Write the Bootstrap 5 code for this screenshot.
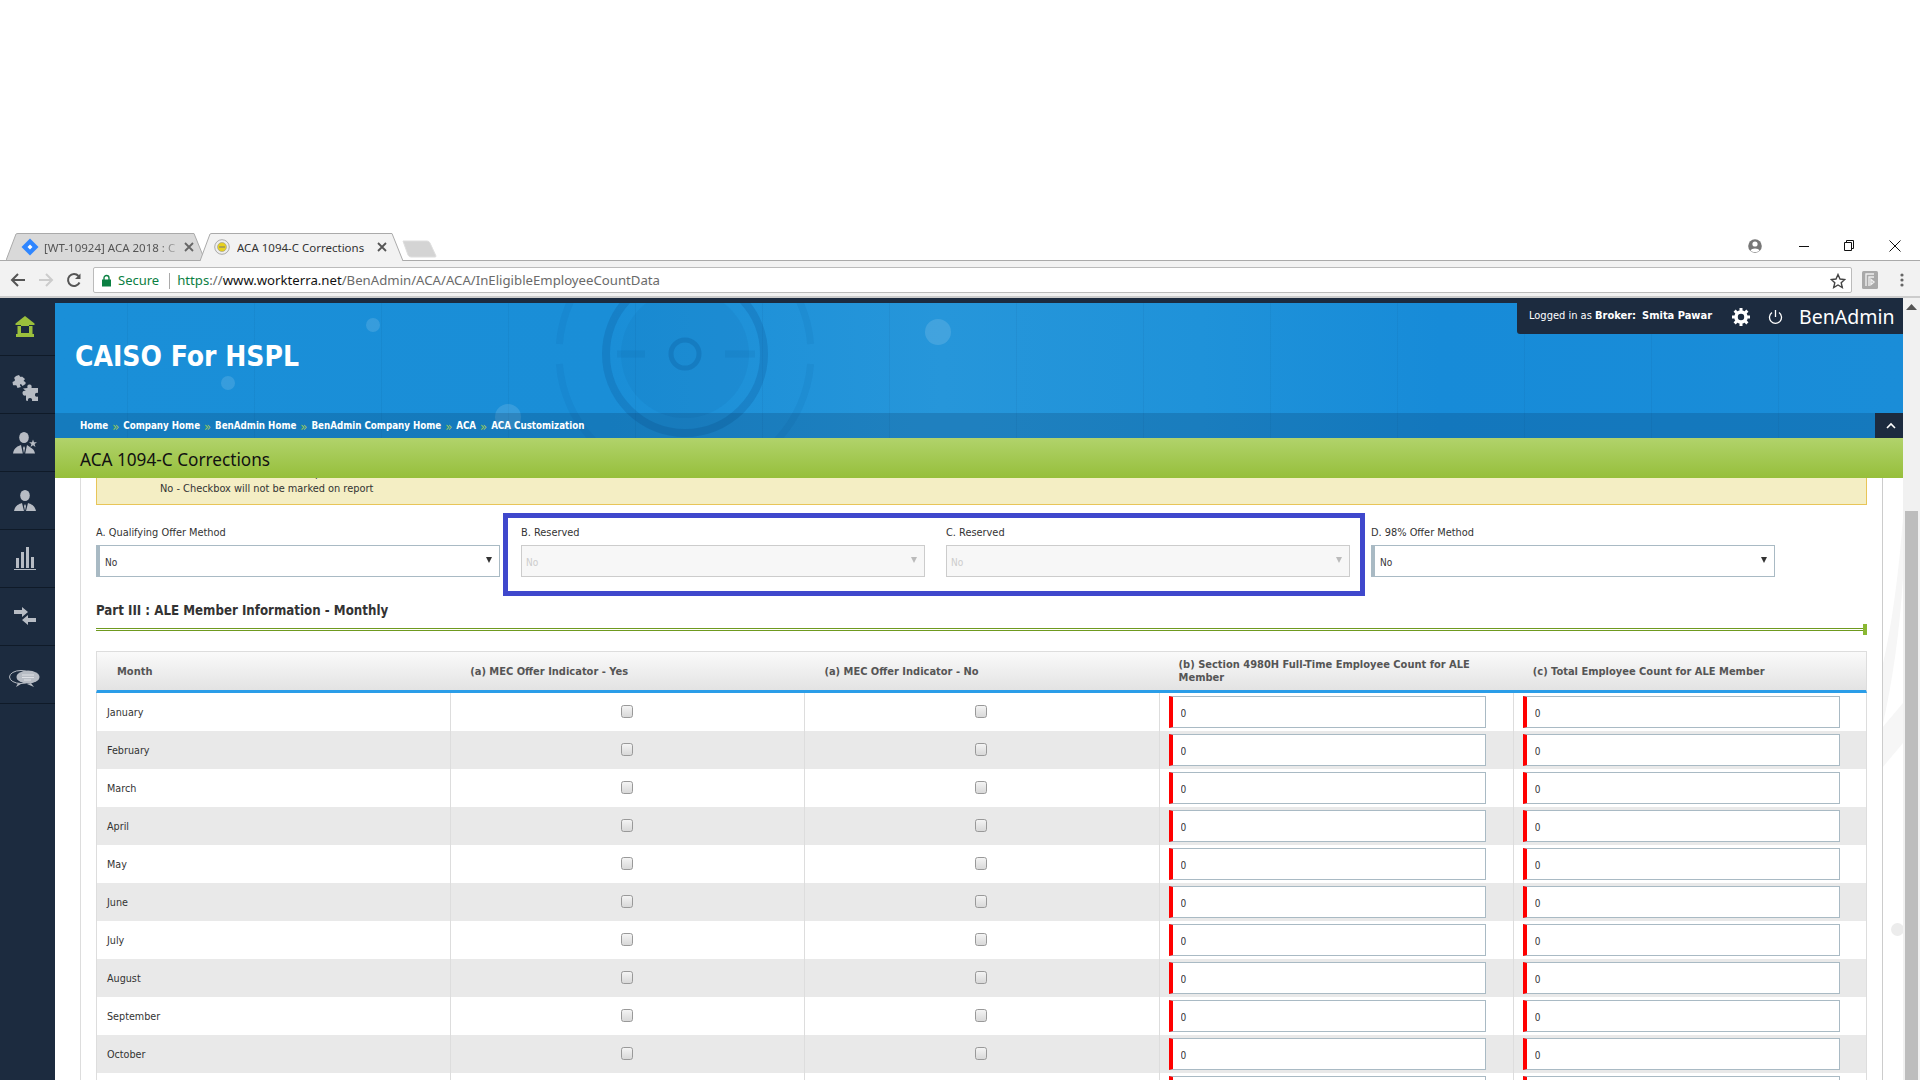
<!DOCTYPE html>
<html lang="en">
<head>
<meta charset="utf-8">
<title>ACA 1094-C Corrections</title>
<link href="https://cdn.jsdelivr.net/npm/bootstrap@5.3.0/dist/css/bootstrap.min.css" rel="stylesheet">
<style>
html,body{height:1080px;overflow:hidden;background:#fff;margin:0}
body{font-family:"DejaVu Sans Condensed","DejaVu Sans",sans-serif;font-size:10.9px;color:#333}
.blank-top{height:233px}
.tab-strip{height:28px;border-bottom:1px solid #aaa;position:relative;font-family:"Noto Sans",sans-serif;font-size:11.5px}
.chrome-tab{position:relative;height:28px;flex:none;color:#333}
.chrome-tab>svg.shape{position:absolute;left:0;top:0}
.chrome-tab>*:not(.shape){position:relative}
.tab-one{width:200px;margin-left:6px;color:#555}
.tab-one .tab-label{-webkit-mask-image:linear-gradient(90deg,#000 84%,transparent 100%);mask-image:linear-gradient(90deg,#000 84%,transparent 100%)}
.tab-two{width:204px;margin-left:-6px}
.tab-label{white-space:nowrap;overflow:hidden;flex:1;padding-top:1px}
.new-tab{margin-left:-2px;margin-top:7px}
.win-btns{margin-left:auto;padding-right:19px;height:26px}
.tool-bar{height:37px;padding:3px 0 0 4px;background:#f2f2f2;border-bottom:2px solid #ccc;font-family:"Noto Sans",sans-serif}
.nav-ico{width:28px;flex:none}
.addr-box{width:1759px;height:26px;margin-left:5px;background:#fff;border:1px solid #bbb;border-radius:2px;font-size:13.2px;white-space:nowrap;padding:1px 0 0 7px}
.sec-txt{color:#0b8043;font-size:13px;margin-left:6px}
.addr-sep{width:1px;height:16px;background:#aaa;margin:0 7px 0 10px}
.u-green{color:#0b8043}.u-grey{color:#6a6a6a}.u-black{color:#111}
.app-wrap{height:782px}
.side-rail{width:55px;flex:none;background:#1c2b3f}
.rail-item{height:58px;border-bottom:1px solid #0f1a28;padding-right:5px}
.nudge-down{margin-top:6px}
.nudge-up{margin-top:-2px}
.app-main{width:1848px;flex:none;background:#1c2b3f;padding-top:5px;overflow:hidden;position:relative}
.hero-wrap{position:relative;height:135px;overflow:hidden;background-color:#1b8ed7;background-image:repeating-linear-gradient(90deg,transparent 0,transparent 126px,rgba(0,40,90,.06) 126px,rgba(0,40,90,.06) 127px),linear-gradient(90deg,#1a8fd8 0,#1a8ed7 30%,#2696da 48%,#1f92d9 62%,#178bd8 75%,#1a8dd8 100%);background-position:-54px 0,0 0}
.hero-art{position:absolute;left:0;top:-5px}
.hero{height:110px;position:relative}
.hero-title{position:relative;margin:0;padding:36px 0 0 20px;font-size:28px;line-height:36px;font-weight:700;color:#fff;font-family:"DejaVu Sans Condensed",sans-serif}
.login-box{position:absolute;right:0;top:0;width:386px;height:36px;background:#1c2b3f;color:#fff;border-bottom-left-radius:3px;padding:1px 0 0 12px;font-size:11px;z-index:2}
.login-box b{font-weight:700}
.ben-name{font-family:"Noto Sans",sans-serif;font-size:19.500px;margin-left:16px}
.crumb-bar{height:25px;background:rgba(0,20,50,.16);position:relative;overflow:hidden;font-size:9.700px;font-weight:700;color:#fff;padding:2px 0 0 25px}
.crumb-sep{color:#9cc85a;font-weight:400;width:15px;text-align:center;flex:none;font-size:13px;line-height:12px}
.crumb-up{position:absolute;right:0;top:0;width:28px;height:25px;background:#1c2b3f;padding-left:3px}
.title-bar{height:40px;background:linear-gradient(180deg,#b1d36b 0,#96bf3b 100%);padding:4px 0 0 25px;font-family:"Noto Sans",sans-serif;font-size:17.200px;color:#111}
.content-outer{height:602px;overflow:hidden;background:#fff;position:relative}
.pane-swoosh{position:absolute;left:1827px;top:0}
.pane-circle{position:absolute;left:1836px;top:445px;width:13px;height:13px;border-radius:50%;background:#ececec}
.content-pane{height:602px;overflow:hidden;background:#fff;position:relative;margin-left:25px;width:1803px;border-left:1px solid #ddd;border-right:1px solid #ccc}
.pane-inner{width:1771px;margin-left:15px}
.note-box{margin-top:-13px;height:40px;background:#f4eec4;border:1px solid #e8c558;padding:0 0 0 9px;line-height:15px;color:#333}
.note-box span{display:block}
.note-box .note-no{padding-left:54px}
.field-row{position:relative;margin-top:8px;padding-top:13px;height:83px}
.field-col{width:425px;flex:none;padding-right:21px}
.field-lbl{display:block;line-height:13px;margin-bottom:6px;height:13px;color:#333}
.blue-mark{position:absolute;left:407px;top:0;width:862px;height:83px;border:5px solid #3f48cc}
select.plain-sel{height:32px;border-radius:0;font-size:10px;color:#333;padding:3px 20px 0 5px;border:1px solid #a9bac4;border-left-width:4px;background-size:6px 6px;background-position:right 7px top 11px;background-image:url("data:image/svg+xml,%3csvg xmlns='http://www.w3.org/2000/svg' viewBox='0 0 6 6'%3e%3cpath fill='%23333' d='M0 0h6L3 6z'/%3e%3c/svg%3e")}
select.plain-sel:disabled{background-color:#f7f7f7;border:1px solid #ccc;color:#ccc;padding-left:4px;background-image:url("data:image/svg+xml,%3csvg xmlns='http://www.w3.org/2000/svg' viewBox='0 0 6 6'%3e%3cpath fill='%23bbb' d='M0 0h6L3 6z'/%3e%3c/svg%3e")}
.part-head{margin:0;font-size:13.200px;font-weight:700;color:#333;line-height:16px;padding-top:7px}
.dbl-line{position:relative;height:3px;margin-top:9px;border-top:1px solid #6f9a1f;border-bottom:1px solid #6f9a1f}
.dbl-line i{position:absolute;right:0;top:-5px;width:4px;height:11px;background:#8ab833}
.data-table{margin:20px 0 0;table-layout:fixed;width:1771px;font-size:10.7px;border-collapse:separate;border-spacing:0}
.data-table thead th{height:42px;padding:0 10px 0 20px;font-size:11px;line-height:13px;font-weight:700;color:#555;vertical-align:middle;background:linear-gradient(180deg,#fafafa 0,#e3e3e3 100%);border:0;border-top:1px solid #ddd;border-bottom:3px solid #2a9de8;box-shadow:none}
.data-table thead th:first-child{border-left:1px solid #ddd}
.data-table thead th:last-child{border-right:1px solid #ddd}
.data-table tbody td{height:38px;padding:0 0 0 9px;vertical-align:middle;background:#fff;border:0;border-left:1px solid #ddd;color:#333;box-shadow:none}
.data-table tbody td:last-child{border-right:1px solid #ddd}
.data-table tbody td:first-child{padding:2px 0 0 10px}
.data-table tbody tr:nth-child(even) td{background:#e9e9e9}
.data-table td.chk-cell{text-align:center;padding:0 2px 0 0}
input.box-chk{margin:0;width:12px;height:13px;border-radius:2px;border:1px solid #999;background:linear-gradient(180deg,#f4f4f4,#d8d8d8);vertical-align:middle;float:none}
input.num-fld{width:317px;height:32px;border-radius:0;border:1px solid #a9bac4;border-left:4px solid #f00;font-size:10px;padding:3px 0 0 8px;color:#333;background:#fff;line-height:14px;min-height:0}
.scroll-rail{width:17px;flex:none;background:#f1f1f1;padding-left:2px}
.scroll-up{height:22px;padding-top:6px;padding-left:1px}
.scroll-gap{height:191px}
.scroll-thumb{width:13px;height:569px;background:#bdbdbd}
</style>
</head>
<body>
<div class="blank-top"></div>

<div class="tab-strip d-flex">
  <div class="chrome-tab tab-one d-flex align-items-center">
    <svg class="shape" width="200" height="28" viewBox="0 0 200 28"><path d="M0 27.500 10 1Q10.500 .5 12 .5H188L199 27.500Z" fill="#d9d9d9" stroke="#aaa"/></svg>
    <svg width="18" height="18" viewBox="0 0 18 18" class="flex-none" style="margin-left:15px;margin-right:5px"><path d="M9 .5 17.500 9 9 17.500.5 9z" fill="#2f86ff"/><path d="M9 6.500 11.500 9 9 11.500 6.500 9z" fill="#fff"/></svg>
    <span class="tab-label">[WT-10924] ACA 2018 : C</span>
    <svg width="12" height="12" viewBox="0 0 12 12" style="margin-left:1px;margin-right:11px"><path d="M2 2 10 10M10 2 2 10" stroke="#666" stroke-width="1.800"/></svg>
  </div>
  <div class="chrome-tab tab-two d-flex align-items-center">
    <svg class="shape" width="204" height="29" viewBox="0 0 204 29"><path d="M0 28 10 1Q10.500 .5 12 .5H192L203 28" fill="#f2f2f2" stroke="#aaa"/></svg>
    <svg width="16" height="16" viewBox="0 0 16 16" class="flex-none" style="margin-left:14px;margin-right:7px"><circle cx="8" cy="8" r="7.300" fill="#eee" stroke="#aaa"/><circle cx="8" cy="8" r="4.500" fill="#e8d21d" stroke="#999" stroke-width=".6"/><path d="M5 8h6" stroke="#777"/></svg>
    <span class="tab-label">ACA 1094-C Corrections</span>
    <svg width="12" height="12" viewBox="0 0 12 12" style="margin-right:16px"><path d="M2 2 10 10M10 2 2 10" stroke="#555" stroke-width="1.800"/></svg>
  </div>
  <svg class="new-tab" width="36" height="18" viewBox="0 0 36 18"><path d="M1 1H25Q27 1 28 3L34 16Q34 17 33 17H9Q7 17 6 15Z" fill="#d4d4d4" stroke="#dedede"/></svg>
  <div class="win-btns d-flex align-items-center">
    <svg width="16" height="16" viewBox="0 0 16 16" style="margin-right:35px"><circle cx="8" cy="8" r="6.800" fill="#777"/><circle cx="8" cy="6" r="2.600" fill="#fff"/><path d="M3.500 12.500C4.500 9.800 11.500 9.800 12.500 12.500 10.500 14.500 5.500 14.500 3.500 12.500Z" fill="#fff"/></svg>
    <svg width="12" height="12" viewBox="0 0 12 12" style="margin-right:33px"><path d="M1 6.500H11" stroke="#111"/></svg>
    <svg width="12" height="12" viewBox="0 0 12 12" style="margin-right:34px"><path d="M3.500 2.500V.5H10.500V8.500H8.500M1.500 2.500H8.500V10.500H1.500Z" fill="none" stroke="#111"/></svg>
    <svg width="12" height="12" viewBox="0 0 12 12"><path d="M.5 .5 11.500 11.500M11.500 .5 .5 11.500" stroke="#111"/></svg>
  </div>
</div>

<div class="tool-bar d-flex align-items-center">
  <div class="nav-ico d-flex justify-content-center"><svg width="16" height="16" viewBox="0 0 16 16"><path d="M15 8H2M8 2 2 8 8 14" fill="none" stroke="#555" stroke-width="2"/></svg></div>
  <div class="nav-ico d-flex justify-content-center"><svg width="16" height="16" viewBox="0 0 16 16"><path d="M1 8H14M8 2 14 8 8 14" fill="none" stroke="#ccc" stroke-width="2"/></svg></div>
  <div class="nav-ico d-flex justify-content-center"><svg width="16" height="16" viewBox="0 0 16 16"><path d="M13.500 10.500A6 6 0 1 1 12.500 4" fill="none" stroke="#555" stroke-width="2"/><path d="M14.500 1.500V7H9Z" fill="#555"/></svg></div>
  <div class="addr-box d-flex align-items-center">
    <svg width="11" height="13" viewBox="0 0 11 13" class="flex-none"><path d="M3 6V4A2.500 2.500 0 0 1 8 4V6" fill="none" stroke="#0b8043" stroke-width="1.400"/><rect x="1" y="5.500" width="9" height="7" fill="#0b8043"/></svg>
    <span class="sec-txt">Secure</span><span class="addr-sep"></span>
    <span><span class="u-green">https</span><span class="u-grey">://</span><span class="u-black">www.workterra.net</span><span class="u-grey">/BenAdmin/ACA/ACA/InEligibleEmployeeCountData</span></span>
    <svg width="16" height="16" viewBox="0 0 16 16" class="ms-auto" style="margin-right:5px"><path d="M8 1.500 10 6 14.800 6.500 11.200 9.700 12.300 14.500 8 12 3.700 14.500 4.800 9.700 1.200 6.500 6 6Z" fill="none" stroke="#444" stroke-width="1.400"/></svg>
  </div>
  <svg width="16" height="18" viewBox="0 0 16 18" style="margin-left:10px"><rect width="16" height="18" rx="1.500" fill="#a9a9a9"/><path d="M4 15V3H12M7 15V6H12M9 8.500 12 11 9 13.500Z" fill="none" stroke="#eee" stroke-width="1.400"/></svg>
  <svg width="4" height="14" viewBox="0 0 4 14" style="margin-left:22px"><circle cx="2" cy="2" r="1.600" fill="#666"/><circle cx="2" cy="7" r="1.600" fill="#666"/><circle cx="2" cy="12" r="1.600" fill="#666"/></svg>
</div>

<div class="app-wrap d-flex">
  <nav class="side-rail">
    <div class="rail-item d-flex align-items-center justify-content-center"><svg width="20" height="21" viewBox="0 0 20 21"><path d="M10 0 19.500 7.500V9H.5V7.500Z" fill="#9bc03c"/><path d="M2.500 10H6V17H14V10H17.500V18H19V21H1V18H2.500Z" fill="#9bc03c"/><path d="M6 9H14V10H6Z" fill="#9bc03c"/></svg></div>
    <div class="rail-item d-flex align-items-center justify-content-center"><svg class="nudge-down" width="27" height="26" viewBox="0 0 27 26"><g fill="#b7bcc4"><path d="M4 1 7 0C8 2 9 2.500 10 1.500L13 4 11.500 6C13 7 14 6.500 13.500 9L10.500 11 9 9C7.500 9 8 11 9 12L5.500 13 4.500 10.500C3 9.500 2 11 1 10L.5 7 2.500 6C3.500 5 2.500 3.500 2 3Z"/><path d="M11 13.500 15.500 13C15 11 15.500 9.500 17.500 9.500S20 11 19.500 13L26 13V18C24 17.500 23 18.500 23 20S24 22 26 21.500V26H20C20.500 24 19.500 23 18 23S15.500 24 16 26L14 25.500V20.500C12 21 10.500 20 10.500 18S12 15.500 14 16Z"/></g></svg></div>
    <div class="rail-item d-flex align-items-center justify-content-center"><svg width="25" height="22" viewBox="0 0 25 22"><g fill="#b7bcc4"><ellipse cx="11" cy="5.500" rx="4.800" ry="5.500"/><path d="M0 21.500C1 15.500 5 14 8 13L9.800 21.500ZM22 21.500C21.500 19 21 18 19 16.500L14 13 12.200 21.500ZM11 14 12 16 11 21.500 10 16Z"/><path d="M20 7.500 21 10.300H24L21.600 12 22.500 15 20 13.200 17.500 15 18.400 12 16 10.300H19Z"/></g></svg></div>
    <div class="rail-item d-flex align-items-center justify-content-center"><svg width="22" height="21" viewBox="0 0 22 21"><g fill="#b7bcc4"><ellipse cx="11" cy="5.500" rx="4.800" ry="5.500"/><path d="M0 21C1 15.500 5 14 8 13L10 21ZM22 21C21 15.500 17 14 14 13L12 21ZM11 14 12 16 11 21 10 16Z"/></g></svg></div>
    <div class="rail-item d-flex align-items-center justify-content-center"><svg width="23" height="23" viewBox="0 0 23 23"><g fill="#b7bcc4"><rect x="2" y="11" width="3" height="10"/><rect x="7" y="5" width="3" height="16"/><rect x="12" y="0" width="3" height="21"/><rect x="17" y="10" width="3" height="11"/><rect x="0" y="22" width="22" height="1"/></g></svg></div>
    <div class="rail-item d-flex align-items-center justify-content-center"><svg class="nudge-up" width="23" height="18" viewBox="0 0 23 18"><g fill="#b7bcc4"><path d="M0 3H8V0L14 5 8 10V7H0Z"/><path d="M22 11H14V8L8 13 14 18V15H22Z"/></g></svg></div>
    <div class="rail-item d-flex align-items-center justify-content-center"><svg class="nudge-down" width="32" height="20" viewBox="0 0 32 20"><ellipse cx="12" cy="9" rx="11.500" ry="6.500" fill="none" stroke="#b7bcc4"/><path d="M9 15 7 19 12 16ZM22 15 25 19 18 16Z" fill="#b7bcc4"/><ellipse cx="19" cy="9" rx="11.500" ry="6.500" fill="#b7bcc4"/><path d="M13 7H25M13 9.500H25M15 12H22" stroke="#e8eaed" stroke-width=".8"/></svg></div>
  </nav>

  <div class="app-main">
    <div class="login-box d-flex align-items-center">
      <span>Logged in as&nbsp;<b>Broker:</b></span><b style="margin-left:6px">Smita Pawar</b>
      <svg width="18" height="18" viewBox="0 0 18 18" style="margin-left:20px"><circle cx="9" cy="9" r="5" fill="none" stroke="#fff" stroke-width="3.600"/><path d="M9 0V4M9 14V18M0 9H4M14 9H18M2.600 2.600 5.500 5.500M12.500 12.500 15.400 15.400M15.400 2.600 12.500 5.500M5.500 12.500 2.600 15.400" stroke="#fff" stroke-width="3"/></svg>
      <svg width="15" height="16" viewBox="0 0 15 16" style="margin-left:18px"><path d="M4 3.500A6 6 0 1 0 11 3.500M7.500 1V8" fill="none" stroke="#fff" stroke-width="1.300"/></svg>
      <span class="ben-name">BenAdmin</span>
    </div>
    <div class="hero-wrap">
      <svg class="hero-art" width="1848" height="140" viewBox="0 0 1848 140">
        <circle cx="630" cy="56" r="64" fill="#0a5a9a" fill-opacity=".09"/>
        <g fill="none" stroke="#0a5a9a">
          <circle cx="630" cy="56" r="14" stroke-width="5" stroke-opacity=".3"/>
          <circle cx="630" cy="56" r="79" stroke-width="8" stroke-opacity=".26"/>
          <path d="M504.400 46A126 126 0 0 1 624 -69.900M636 -69.900A126 126 0 0 1 755.600 46M755.600 66A126 126 0 0 1 636 181.900M624 181.900A126 126 0 0 1 504.400 66" stroke-width="7" stroke-opacity=".1"/>
          <path d="M562 56H590M670 56H700" stroke-width="7" stroke-opacity=".12"/>
        </g>
        <g fill="#fff" fill-opacity=".13">
          <circle cx="318" cy="27" r="7"/><circle cx="173" cy="85" r="7"/><circle cx="453" cy="119" r="13"/><circle cx="883" cy="34" r="13"/>
        </g>
      </svg>
      <header class="hero">
        <h1 class="hero-title">CAISO For HSPL</h1>
      </header>
      <div class="crumb-bar d-flex align-items-center">
        <span>Home</span><span class="crumb-sep">»</span><span>Company Home</span><span class="crumb-sep">»</span><span>BenAdmin Home</span><span class="crumb-sep">»</span><span>BenAdmin Company Home</span><span class="crumb-sep">»</span><span>ACA</span><span class="crumb-sep">»</span><span>ACA Customization</span>
        <div class="crumb-up d-flex align-items-center justify-content-center"><svg width="10" height="7" viewBox="0 0 10 7"><path d="M1 6 5 2 9 6" fill="none" stroke="#fff" stroke-width="1.600"/></svg></div>
      </div>
    </div>
    <div class="title-bar d-flex align-items-center">ACA 1094-C Corrections</div>
    <div class="content-outer">
      <svg class="pane-swoosh" width="21" height="602" viewBox="0 0 21 602"><path d="M21 40Q14 130 0 190V250Q16 180 21 100ZM21 225 0 250V290L21 265Z" fill="#f6f6f6"/></svg>
      <div class="pane-circle"></div>
      <div class="content-pane">
      <div class="pane-inner">
        <div class="note-box"><span>Note : Yes - Checkbox will be marked on report</span><span class="note-no">No - Checkbox will not be marked on report</span></div>
        <div class="field-row d-flex">
          <div class="field-col"><label class="field-lbl">A. Qualifying Offer Method</label><select class="form-select plain-sel"><option>No</option></select></div>
          <div class="field-col"><label class="field-lbl">B. Reserved</label><select class="form-select plain-sel" disabled><option>No</option></select></div>
          <div class="field-col"><label class="field-lbl">C. Reserved</label><select class="form-select plain-sel" disabled><option>No</option></select></div>
          <div class="field-col"><label class="field-lbl">D. 98% Offer Method</label><select class="form-select plain-sel"><option>No</option></select></div>
          <div class="blue-mark"></div>
        </div>
        <h2 class="part-head">Part III : ALE Member Information - Monthly</h2>
        <div class="dbl-line"><i></i></div>
        <table class="table data-table">
          <thead><tr><th>Month</th><th>(a) MEC Offer Indicator - Yes</th><th>(a) MEC Offer Indicator - No</th><th>(b) Section 4980H Full-Time Employee Count for ALE Member</th><th>(c) Total Employee Count for ALE Member</th></tr></thead>
          <tbody>
            <tr><td>January</td><td class="chk-cell"><input type="checkbox" class="form-check-input box-chk"></td><td class="chk-cell"><input type="checkbox" class="form-check-input box-chk"></td><td><input class="form-control num-fld" value="0"></td><td><input class="form-control num-fld" value="0"></td></tr>
            <tr><td>February</td><td class="chk-cell"><input type="checkbox" class="form-check-input box-chk"></td><td class="chk-cell"><input type="checkbox" class="form-check-input box-chk"></td><td><input class="form-control num-fld" value="0"></td><td><input class="form-control num-fld" value="0"></td></tr>
            <tr><td>March</td><td class="chk-cell"><input type="checkbox" class="form-check-input box-chk"></td><td class="chk-cell"><input type="checkbox" class="form-check-input box-chk"></td><td><input class="form-control num-fld" value="0"></td><td><input class="form-control num-fld" value="0"></td></tr>
            <tr><td>April</td><td class="chk-cell"><input type="checkbox" class="form-check-input box-chk"></td><td class="chk-cell"><input type="checkbox" class="form-check-input box-chk"></td><td><input class="form-control num-fld" value="0"></td><td><input class="form-control num-fld" value="0"></td></tr>
            <tr><td>May</td><td class="chk-cell"><input type="checkbox" class="form-check-input box-chk"></td><td class="chk-cell"><input type="checkbox" class="form-check-input box-chk"></td><td><input class="form-control num-fld" value="0"></td><td><input class="form-control num-fld" value="0"></td></tr>
            <tr><td>June</td><td class="chk-cell"><input type="checkbox" class="form-check-input box-chk"></td><td class="chk-cell"><input type="checkbox" class="form-check-input box-chk"></td><td><input class="form-control num-fld" value="0"></td><td><input class="form-control num-fld" value="0"></td></tr>
            <tr><td>July</td><td class="chk-cell"><input type="checkbox" class="form-check-input box-chk"></td><td class="chk-cell"><input type="checkbox" class="form-check-input box-chk"></td><td><input class="form-control num-fld" value="0"></td><td><input class="form-control num-fld" value="0"></td></tr>
            <tr><td>August</td><td class="chk-cell"><input type="checkbox" class="form-check-input box-chk"></td><td class="chk-cell"><input type="checkbox" class="form-check-input box-chk"></td><td><input class="form-control num-fld" value="0"></td><td><input class="form-control num-fld" value="0"></td></tr>
            <tr><td>September</td><td class="chk-cell"><input type="checkbox" class="form-check-input box-chk"></td><td class="chk-cell"><input type="checkbox" class="form-check-input box-chk"></td><td><input class="form-control num-fld" value="0"></td><td><input class="form-control num-fld" value="0"></td></tr>
            <tr><td>October</td><td class="chk-cell"><input type="checkbox" class="form-check-input box-chk"></td><td class="chk-cell"><input type="checkbox" class="form-check-input box-chk"></td><td><input class="form-control num-fld" value="0"></td><td><input class="form-control num-fld" value="0"></td></tr>
            <tr><td>November</td><td class="chk-cell"><input type="checkbox" class="form-check-input box-chk"></td><td class="chk-cell"><input type="checkbox" class="form-check-input box-chk"></td><td><input class="form-control num-fld" value="0"></td><td><input class="form-control num-fld" value="0"></td></tr>
          </tbody>
        </table>
      </div>
      </div>
    </div>
  </div>

  <aside class="scroll-rail">
    <div class="scroll-up"><svg width="11" height="6" viewBox="0 0 11 6" class="d-block"><path d="M5.500 0 11 6H0Z" fill="#555"/></svg></div>
    <div class="scroll-gap"></div>
    <div class="scroll-thumb"></div>
  </aside>
</div>
<script src="https://cdn.jsdelivr.net/npm/bootstrap@5.3.0/dist/js/bootstrap.bundle.min.js"></script>
</body>
</html>
